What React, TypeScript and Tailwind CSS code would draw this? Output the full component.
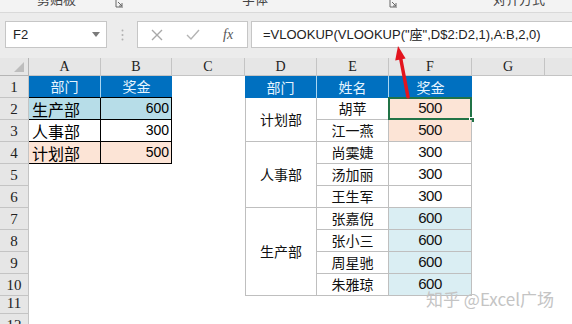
import React from "react";

const cjk = "font-['Noto_Sans_CJK_SC',sans-serif]";
const num = "font-['Liberation_Sans',sans-serif]";
const serif = "font-['Liberation_Serif',serif]";

function Launcher() {
  return (
    <svg width="9" height="9" viewBox="0 0 9 9" className="shrink-0">
      <path d="M1 1 L1 8 L8 8" fill="none" stroke="#666" strokeWidth="1" />
      <path d="M3 3 L7 7 M7 4 L7 7 L4 7" fill="none" stroke="#666" strokeWidth="1" />
    </svg>
  );
}

const colHeaders = [
  { l: "A", c: "col-start-2" },
  { l: "B", c: "col-start-3" },
  { l: "C", c: "col-start-4" },
  { l: "D", c: "col-start-5" },
  { l: "E", c: "col-start-6" },
  { l: "F", c: "col-start-7 bg-[#d4d4d4]" },
  { l: "G", c: "col-start-8" },
];

const rowHeaders = [
  { n: "1", c: "row-start-2" },
  { n: "2", c: "row-start-3 bg-[#d4d4d4]" },
  { n: "3", c: "row-start-4" },
  { n: "4", c: "row-start-5" },
  { n: "5", c: "row-start-6" },
  { n: "6", c: "row-start-7" },
  { n: "7", c: "row-start-8" },
  { n: "8", c: "row-start-9" },
  { n: "9", c: "row-start-10" },
  { n: "10", c: "row-start-11" },
  { n: "11", c: "row-start-12" },
  { n: "12", c: "row-start-13" },
];

const names = [
  { n: "胡苹", v: "500", r: "row-start-3", b: "bg-[#fce4d6]" },
  { n: "江一燕", v: "500", r: "row-start-4", b: "bg-[#fce4d6]" },
  { n: "尚霙婕", v: "300", r: "row-start-5", b: "bg-white" },
  { n: "汤加丽", v: "300", r: "row-start-6", b: "bg-white" },
  { n: "王生军", v: "300", r: "row-start-7", b: "bg-white" },
  { n: "张嘉倪", v: "600", r: "row-start-8", b: "bg-[#daeef3]" },
  { n: "张小三", v: "600", r: "row-start-9", b: "bg-[#daeef3]" },
  { n: "周星驰", v: "600", r: "row-start-10", b: "bg-[#daeef3]" },
  { n: "朱雅琼", v: "600", r: "row-start-11", b: "bg-[#daeef3]" },
];

export default function App() {
  return (
    <div className="relative w-[572px] h-[324px] overflow-hidden bg-white">
      {/* ribbon strip */}
      <div className="h-[13px] bg-[#f3f3f3] border-b border-[#d9d9d9] overflow-hidden">
        <div className={`flex items-center -mt-[9px] h-[16px] text-[13px] leading-[16px] text-[#444] ${cjk}`}>
          <span className="ml-[37px]">剪贴板</span>
          <span className="ml-[39px] mt-[8px]"><Launcher /></span>
          <span className="ml-[118px]">字体</span>
          <span className="ml-[121px] mt-[8px]"><Launcher /></span>
          <span className="ml-[95px]">对齐方式</span>
        </div>
      </div>

      {/* formula bar */}
      <div className="h-[45px] bg-[#ececec] flex items-start pt-[8px]">
        <div className="ml-[5px] w-[102px] h-[27px] bg-white border border-[#c6c6c6] flex items-center justify-between pl-[7px] pr-[6px]">
          <span className={`text-[13px] text-[#222] ${num}`}>F2</span>
          <svg width="8" height="5" viewBox="0 0 8 5"><path d="M0 0 L8 0 L4 5 Z" fill="#7a7a7a" /></svg>
        </div>
        <div className="w-[30px] h-[27px] flex items-center justify-center">
          <svg width="3" height="12" viewBox="0 0 3 12">
            <circle cx="1.5" cy="1.5" r="1" fill="#b0b0b0" />
            <circle cx="1.5" cy="6" r="1" fill="#b0b0b0" />
            <circle cx="1.5" cy="10.5" r="1" fill="#b0b0b0" />
          </svg>
        </div>
        <div className="w-[111px] h-[27px] bg-white border border-[#c6c6c6] flex items-center">
          <svg width="12" height="12" viewBox="0 0 12 12" className="ml-[13px]">
            <path d="M1 1 L11 11 M11 1 L1 11" stroke="#a8a8a8" strokeWidth="1.4" />
          </svg>
          <svg width="14" height="12" viewBox="0 0 14 12" className="ml-[23px]">
            <path d="M1 6 L5 10 L13 1" fill="none" stroke="#b4b4b4" strokeWidth="1.4" />
          </svg>
          <span className={`ml-[23px] italic text-[14px] text-[#555] ${serif}`}>fx</span>
        </div>
        <div className="ml-[3px] flex-1 h-[27px] bg-white border border-r-0 border-[#c6c6c6] flex items-center pl-[11px]">
          <span className={`text-[13px] text-[#222] whitespace-nowrap ${num}`}>
            =VLOOKUP(VLOOKUP("<span className={cjk}>座</span>",D$2:D2,1),A:B,2,0)
          </span>
        </div>
      </div>

      {/* sheet grid */}
      <div className="grid grid-cols-[29px_72px_71px_73px_72px_72px_83px_73px_1fr] grid-rows-[18px_repeat(10,22px)_18px_22px] bg-white">
        {/* corner */}
        <div className="col-start-1 row-start-1 bg-[#e6e6e6] border-r border-b border-[#b5b5b5] relative">
          <svg width="10" height="10" viewBox="0 0 10 10" className="absolute right-[4px] bottom-[3px]">
            <path d="M10 0 L10 10 L0 10 Z" fill="#bdbdbd" />
          </svg>
        </div>
        {colHeaders.map((h) => (
          <div
            key={h.l}
            className={`row-start-1 bg-[#e6e6e6] border-r border-b border-[#c4c4c4] flex items-end justify-center pb-[1px] text-[14px] leading-none text-[#222] ${serif} ${h.c}`}
          >
            {h.l}
          </div>
        ))}
        <div className="col-start-9 row-start-1 bg-[#e6e6e6] border-b border-[#c4c4c4]" />

        {rowHeaders.map((h) => (
          <div
            key={h.n}
            className={`col-start-1 bg-[#e6e6e6] border-r border-b border-[#c4c4c4] flex items-end justify-center pb-[2px] text-[15px] leading-none text-[#222] ${serif} ${h.c}`}
          >
            {h.n}
          </div>
        ))}

        {/* left table */}
        <div className={`col-start-2 row-start-2 bg-[#0070c0] border-r border-[#a9d6f2] border-b border-b-black flex items-center justify-center text-[14px] text-[#e6f5ff] ${cjk}`}>部门</div>
        <div className={`col-start-3 row-start-2 bg-[#0070c0] border-b border-black flex items-center justify-center text-[14px] text-[#e6f5ff] ${cjk}`}>奖金</div>

        <div className={`col-start-2 row-start-3 bg-[#b7dde8] border-r border-b border-black flex items-center pl-[3px] text-[16px] text-black ${cjk}`}>生产部</div>
        <div className={`col-start-3 row-start-3 bg-[#b7dde8] border-r border-b border-black flex items-center justify-end pr-[2px] text-[14px] text-black ${num}`}>600</div>
        <div className={`col-start-2 row-start-4 bg-white border-r border-b border-black flex items-center pl-[3px] text-[16px] text-black ${cjk}`}>人事部</div>
        <div className={`col-start-3 row-start-4 bg-white border-r border-b border-black flex items-center justify-end pr-[2px] text-[14px] text-black ${num}`}>300</div>
        <div className={`col-start-2 row-start-5 bg-[#fce4d6] border-r border-b border-black flex items-center pl-[3px] text-[16px] text-black ${cjk}`}>计划部</div>
        <div className={`col-start-3 row-start-5 bg-[#fce4d6] border-r border-b border-black flex items-center justify-end pr-[2px] text-[14px] text-black ${num}`}>500</div>

        {/* right table header */}
        <div className={`col-start-5 row-start-2 bg-[#0070c0] border-r border-[#a9d6f2] flex items-center justify-center text-[14px] text-[#e6f5ff] ${cjk}`}>部门</div>
        <div className={`col-start-6 row-start-2 bg-[#0070c0] border-r border-[#a9d6f2] flex items-center justify-center text-[14px] text-[#e6f5ff] ${cjk}`}>姓名</div>
        <div className={`col-start-7 row-start-2 bg-[#0070c0] flex items-center justify-center text-[14px] text-[#e6f5ff] ${cjk}`}>奖金</div>

        {/* merged department cells */}
        <div className={`col-start-5 row-start-3 row-span-2 border-l border-r border-b border-[#bfbfbf] flex items-center justify-center text-[14px] text-[#111] ${cjk}`}>计划部</div>
        <div className={`col-start-5 row-start-5 row-span-3 border-l border-r border-b border-[#bfbfbf] flex items-center justify-center text-[14px] text-[#111] ${cjk}`}>人事部</div>
        <div className={`col-start-5 row-start-8 row-span-4 border-l border-r border-b border-[#bfbfbf] flex items-center justify-center text-[14px] text-[#111] ${cjk}`}>生产部</div>

        {names.map((r) => (
          <React.Fragment key={r.n}>
            <div className={`col-start-6 border-r border-b border-[#bfbfbf] flex items-center justify-center text-[14px] text-[#111] ${cjk} ${r.r}`}>{r.n}</div>
            <div className={`col-start-7 border-r border-b border-[#bfbfbf] flex items-center justify-center text-[15px] tracking-[-0.5px] text-[#111] ${num} ${r.r} ${r.b} relative`}>
              {r.v}
              {r.n === "胡苹" && (
                <>
                  <div className="absolute -left-[1px] -top-[1px] -right-[1px] -bottom-[1px] border-2 border-[#217346]" />
                  <div className="absolute -right-[4px] -bottom-[4px] w-[6px] h-[6px] bg-[#217346] border border-white" />
                </>
              )}
            </div>
          </React.Fragment>
        ))}
      </div>

      {/* red arrow annotation */}
      <svg className="absolute left-0 top-0 pointer-events-none" width="572" height="324" viewBox="0 0 572 324">
        <line x1="408" y1="97" x2="400.6" y2="58" stroke="#e3141e" strokeWidth="3.5" strokeLinecap="round" />
        <polygon points="398,46 405.6,58.6 395.2,60.6" fill="#e3141e" />
      </svg>

      {/* watermark */}
      <div className={`absolute left-[426px] top-[289px] whitespace-nowrap text-[17px] leading-[20px] text-[#c4c4c4] ${cjk}`}>
        知乎 @Excel广场
      </div>
    </div>
  );
}
